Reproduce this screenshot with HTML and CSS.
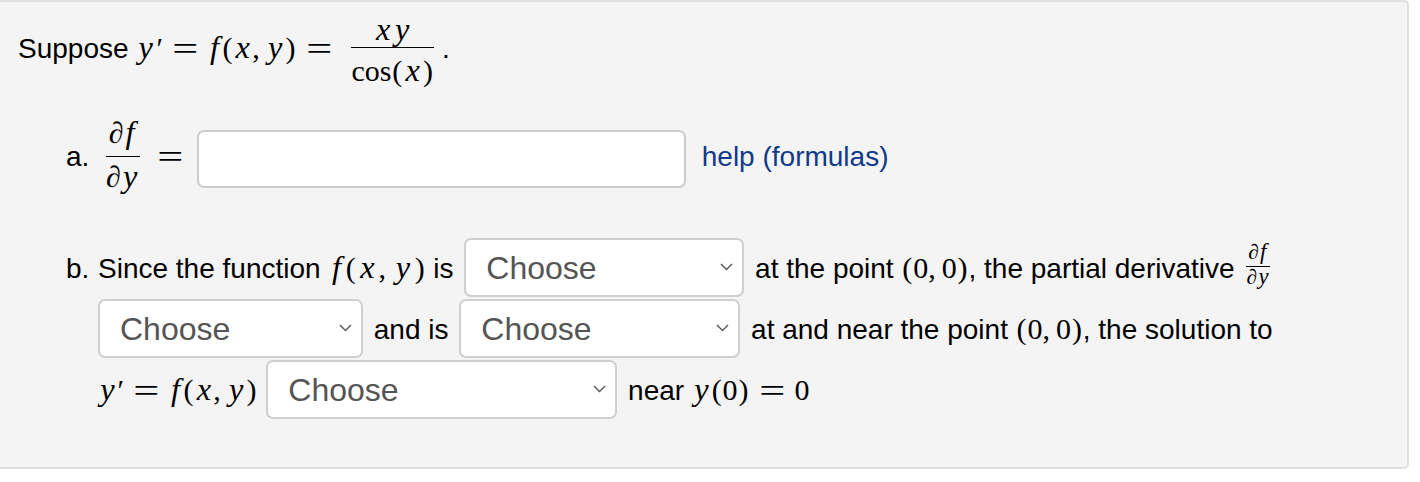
FILE: index.html
```html
<!DOCTYPE html>
<html lang="en">
<head>
<meta charset="utf-8">
<title>Problem</title>
<link rel="stylesheet" href="styles.css">
</head>
<body>
<div class="panel">
  <p class="intro">Suppose <span class="m"><span class="v">y</span><span class="pr">′</span><span class="rel">=</span><span class="v f">f</span><span class="br">(</span><span class="v">x</span><span class="p">,</span><span class="v">y</span><span class="br">)</span><span class="rel">=</span><span class="frac fr-intro"><span class="num"><span class="v">x</span><span class="v">y</span></span><span class="den">cos<span class="br">(</span><span class="v">x</span><span class="br">)</span></span></span></span>.</p>
  <ol class="parts">
    <li class="part part-a">
      <span class="mark">a.</span>
      <div class="body"><span class="m"><span class="frac fr-a"><span class="num">∂<span class="v f">f</span></span><span class="den">∂<span class="v">y</span></span></span><span class="rel">=</span></span><input class="answer" type="text" aria-label="answer"><a class="help" href="#">help (formulas)</a></div>
    </li>
    <li class="part part-b">
      <span class="mark">b.</span>
      <div class="body">Since the function <span class="m wide"><span class="v f">f</span><span class="br">(</span><span class="v">x</span><span class="p">,</span><span class="v">y</span><span class="br">)</span></span> is <span class="sel sel-1"><select aria-label="choice 1"><option>Choose</option></select><svg class="chev" viewBox="0 0 13 8" width="13" height="8"><polyline points="1,1 6.5,6.5 12,1" fill="none" stroke="#555" stroke-width="1.4"/></svg></span> at the point <span class="m"><span class="br">(</span>0<span class="p">,</span>0<span class="br">)</span></span>, the partial derivative <span class="m"><span class="frac fr-s"><span class="num">∂<span class="v f">f</span></span><span class="den">∂<span class="v">y</span></span></span></span> <span class="sel sel-2"><select aria-label="choice 2"><option>Choose</option></select><svg class="chev" viewBox="0 0 13 8" width="13" height="8"><polyline points="1,1 6.5,6.5 12,1" fill="none" stroke="#555" stroke-width="1.4"/></svg></span> and is <span class="sel sel-3"><select aria-label="choice 3"><option>Choose</option></select><svg class="chev" viewBox="0 0 13 8" width="13" height="8"><polyline points="1,1 6.5,6.5 12,1" fill="none" stroke="#555" stroke-width="1.4"/></svg></span> at and near the point <span class="m"><span class="br">(</span>0<span class="p">,</span>0<span class="br">)</span></span>, the solution to <span class="m"><span class="v">y</span><span class="pr2">′</span><span class="rel">=</span><span class="v f">f</span><span class="br">(</span><span class="v">x</span><span class="p">,</span><span class="v">y</span><span class="br">)</span></span> <span class="sel sel-4"><select aria-label="choice 4"><option>Choose</option></select><svg class="chev" viewBox="0 0 13 8" width="13" height="8"><polyline points="1,1 6.5,6.5 12,1" fill="none" stroke="#555" stroke-width="1.4"/></svg></span> near <span class="m"><span class="v">y</span><span class="br">(</span>0<span class="br">)</span><span class="rel">=</span>0</span></div>
    </li>
  </ol>
</div>
</body>
</html>
```

FILE: styles.css
```css
* { box-sizing: border-box; }

html, body {
  margin: 0;
  background: #ffffff;
}

body {
  font-family: "Liberation Sans", Arial, Helvetica, sans-serif;
  font-size: 28px;
  color: #000;
}

.panel {
  margin: 0 11px 0 0;
  background: #f4f4f4;
  border: 2px solid #e0e0e0;
  border-left: 0;
  border-radius: 0 5px 5px 0;
  padding: 13px 0 46px 18px;
}

.intro {
  margin: 0;
  line-height: 32px;
}

/* math */
.m {
  font-family: "Liberation Serif", "Times New Roman", serif;
  font-size: 30px;
  line-height: 1;
  white-space: nowrap;
}
.v { font-style: italic; font-size: 1.08em; line-height: 0; padding: 0 0.07em; }
.v.f { padding: 0 0.08em 0 0.06em; }
.m.wide .v { padding: 0 0.115em; }
.br { padding: 0 0.03em; }
.p { margin-right: 0.2em; }
.pr { margin-left: 0.04em; }
.pr2 { margin-left: 0.02em; }
.rel {
  display: inline-block;
  font-size: 1.1em;
  line-height: 1;
  margin: 0 0.4em;
  transform: scaleX(1.4);
  vertical-align: -2px;
}

.frac {
  display: inline-flex;
  flex-direction: column;
  text-align: center;
  padding: 0 4px;
}
.frac .num, .frac .den { display: block; line-height: 30px; }
.frac .den { border-top: 1px solid #000; }

.fr-intro { vertical-align: 18px; margin-left: 2px; padding: 0 8px; }
.fr-intro .num { padding-bottom: 2px; }
.fr-intro .den { padding-top: 8px; }

.fr-a { vertical-align: 23px; padding: 0 8px; }
.fr-a .num { padding-bottom: 8px; }
.fr-a .den { padding-top: 5px; }

.fr-s { font-size: 21px; vertical-align: 19px; padding: 0 4px; }
.fr-s .num, .fr-s .den { line-height: 21px; }
.fr-s .num { padding-bottom: 3px; }

/* parts */
.parts {
  margin: 0;
  padding: 0;
  list-style: none;
}

.part {
  display: grid;
  grid-template-columns: 32px auto;
  align-items: baseline;
  margin-left: 48px;
}

.part-a { margin-top: 32px; line-height: 32px; }
.part-b { margin-top: 46px; line-height: 61px; padding-right: 20px; }

.mark { display: block; }

.answer {
  width: 489px;
  height: 58px;
  margin: 0 16px 0 4px;
  vertical-align: middle;
  background: #fff;
  border: 2px solid #cccccc;
  border-radius: 7px;
  font: inherit;
  padding: 0 12px;
  outline: none;
}

.help {
  color: #103a8a;
  text-decoration: none;
}

.sel {
  position: relative;
  display: inline-block;
  vertical-align: top;
  height: 59px;
  margin: 0 3px;
}
.sel select {
  -webkit-appearance: none;
  appearance: none;
  width: 100%;
  height: 59px;
  margin: 0;
  background: #fff;
  border: 2px solid #cfcfcf;
  border-radius: 7px;
  font-family: "Liberation Sans", Arial, Helvetica, sans-serif;
  font-size: 32px;
  color: #555;
  padding: 0 40px 0 20px;
  outline: none;
}
.sel .chev {
  position: absolute;
  right: 11px;
  top: 50%;
  margin-top: -5px;
  pointer-events: none;
}

.sel-1 { width: 280px; }
.sel-2 { width: 265px; margin-left: 0; }
.sel-3 { width: 281px; }
.sel-4 { width: 351px; margin-left: 1px; }
```
